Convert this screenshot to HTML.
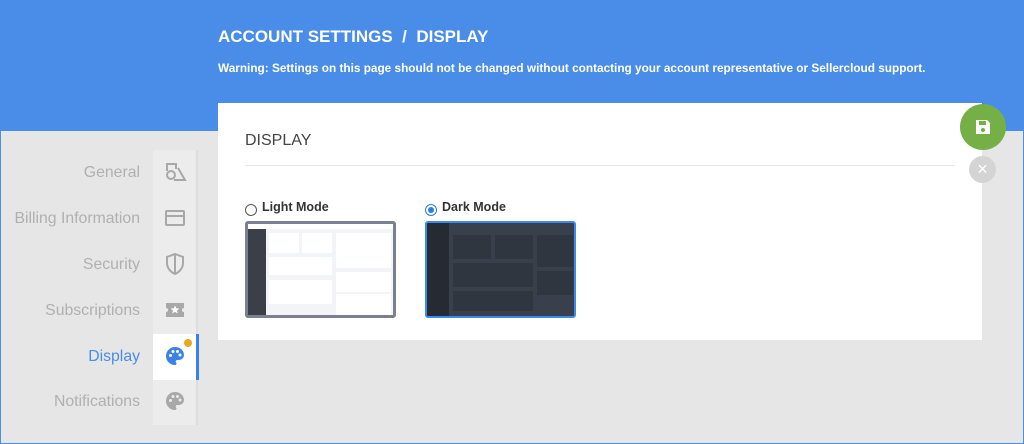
<!DOCTYPE html>
<html><head><style>
*{margin:0;padding:0;box-sizing:border-box}
body{width:1024px;height:444px;overflow:hidden;background:#e6e6e6;font-family:"Liberation Sans",sans-serif;position:relative}
.frame{position:absolute;left:0;top:0;width:1024px;height:444px;border:1px solid #4a8ee8;z-index:10;pointer-events:none}
.hdr{position:absolute;left:0;top:0;width:1024px;height:131px;background:#4a8de9}
.t{position:absolute;left:218px;top:27px;color:#fff;font-size:17px;font-weight:bold}
.w{position:absolute;left:218px;top:61px;color:#fff;font-size:11.8px;font-weight:bold}
.panel{position:absolute;left:218px;top:103px;width:764px;height:237px;background:#fff}
.ph{position:absolute;left:27px;top:29px;font-size:16px;color:#444}
.hr{position:absolute;left:27px;top:62px;width:710px;height:1px;background:#e6e6e6}
.lbl{position:absolute;font-size:12.5px;font-weight:bold;color:#333}
.rad{position:absolute;width:12px;height:12px;border-radius:50%;border:1px solid #555;background:#fff}
.thumb{position:absolute;width:151px;height:97px;border-radius:3px;overflow:hidden}
.side{position:absolute;left:153px;top:150px;width:45px;height:275px;background:#ececec;border-right:2px solid #ddd}
.item{position:absolute;right:884px;font-size:15.8px;color:#b0b0b0;text-align:right;white-space:nowrap}
.ic{position:absolute;left:163px;width:24px;height:24px}
.b{position:absolute}
</style></head><body>
<div class="hdr"></div>
<div class="t">ACCOUNT SETTINGS &nbsp;/&nbsp; DISPLAY</div>
<div class="w">Warning: Settings on this page should not be changed without contacting your account representative or Sellercloud support.</div>
<div class="panel">
<div class="ph">DISPLAY</div><div class="hr"></div>
<div class="rad" style="left:27px;top:101px"></div>
<div class="lbl" style="left:44px;top:97px">Light Mode</div>
<div class="rad" style="left:207px;top:101px;border-color:#2a7de1"><div style="position:absolute;left:2px;top:2px;width:6px;height:6px;border-radius:50%;background:#2a7de1"></div></div>
<div class="lbl" style="left:224px;top:97px">Dark Mode</div>
<div class="thumb" style="left:27px;top:118px;border:3px solid #7a8090;background:linear-gradient(90deg,#3a3f48 0 18px,#f2f4f7 18px)">
<div class="b" style="left:0;top:0;width:151px;height:5px;background:#fff"></div>
<div class="b" style="left:21px;top:9px;width:30px;height:20px;background:#fff"></div>
<div class="b" style="left:54px;top:9px;width:30px;height:20px;background:#fff"></div>
<div class="b" style="left:21px;top:33px;width:63px;height:18px;background:#fff"></div>
<div class="b" style="left:21px;top:56px;width:63px;height:24px;background:#fff"></div>
<div class="b" style="left:88px;top:9px;width:55px;height:35px;background:#fff"></div>
<div class="b" style="left:88px;top:48px;width:55px;height:20px;background:#fff"></div>
<div class="b" style="left:88px;top:70px;width:55px;height:22px;background:#fff"></div>
</div>
<div class="thumb" style="left:207px;top:118px;border:2px solid #3b8af0;background:linear-gradient(90deg,#262b33 0 22px,#39404b 22px)">
<div class="b" style="left:26px;top:12px;width:38px;height:24px;background:#2f3640"></div>
<div class="b" style="left:68px;top:12px;width:38px;height:24px;background:#2f3640"></div>
<div class="b" style="left:110px;top:12px;width:36px;height:32px;background:#2f3640"></div>
<div class="b" style="left:26px;top:40px;width:80px;height:24px;background:#2f3640"></div>
<div class="b" style="left:26px;top:68px;width:80px;height:20px;background:#2f3640"></div>
<div class="b" style="left:110px;top:48px;width:36px;height:24px;background:#2f3640"></div>
</div>
</div>
<div style="position:absolute;left:960px;top:104px;width:46px;height:46px;border-radius:50%;background:#74b045"></div>
<svg style="position:absolute;left:974px;top:118px" width="18" height="18" viewBox="0 0 18 18"><path d="M2 2h11l3 3v11H2z" fill="#fff"/><rect x="5" y="3" width="7" height="4" fill="#74b045"/><circle cx="9" cy="12" r="2" fill="#74b045"/></svg>
<div style="position:absolute;left:969px;top:156px;width:27px;height:27px;border-radius:50%;background:#d4d4d4;color:#fff;font-size:18px;text-align:center;line-height:27px">×</div>
<div class="side"></div>
<div style="position:absolute;left:153px;top:334px;width:45px;height:46px;background:#fff"></div>
<div style="position:absolute;left:196px;top:334px;width:3px;height:46px;background:#3b82e8"></div>
<div style="position:absolute;left:184px;top:339px;width:8px;height:8px;border-radius:50%;background:#e8a820"></div>
<div class="item" style="top:164px">General</div>
<div class="item" style="top:210px">Billing Information</div>
<div class="item" style="top:256px">Security</div>
<div class="item" style="top:302px">Subscriptions</div>
<div class="item" style="top:348px;color:#4a8de9">Display</div>
<div class="item" style="top:393px">Notifications</div>
<svg class="ic" style="top:160px" viewBox="0 0 24 24" fill="none" stroke="#a8a8a8" stroke-width="2"><path d="M4 11V4h9v5"/><circle cx="8" cy="15" r="4"/><path d="M15 8l7 12H11"/></svg>
<svg class="ic" style="top:206px" viewBox="0 0 24 24" fill="none" stroke="#a8a8a8" stroke-width="2"><rect x="3" y="5" width="18" height="14" rx="1"/><path d="M3 10h18"/></svg>
<svg class="ic" style="top:252px" viewBox="0 0 24 24" fill="none" stroke="#a8a8a8" stroke-width="2"><path d="M12 2l8 3v6c0 5-3.5 9-8 11-4.5-2-8-6-8-11V5z M12 2v20"/></svg>
<svg class="ic" style="top:298px" viewBox="0 0 24 24"><path d="M3 5h18v5a2 2 0 000 4v5H3v-5a2 2 0 000-4z" fill="#a8a8a8"/><path d="M12 7.5l1.3 2.7 3 .3-2.2 2 .6 3-2.7-1.6-2.7 1.6.6-3-2.2-2 3-.3z" fill="#fff"/></svg>
<svg class="ic" style="top:344px" viewBox="0 0 24 24"><path d="M12 3a9 9 0 000 18c1 0 1.5-.7 1.5-1.5 0-.4-.2-.8-.4-1-.3-.3-.4-.6-.4-1 0-.8.7-1.5 1.5-1.5H16a5 5 0 005-5c0-4.4-4-8-9-8z" fill="#3b82e8"/><circle cx="7.5" cy="11.5" r="1.5" fill="#fff"/><circle cx="10" cy="7.5" r="1.5" fill="#fff"/><circle cx="14.5" cy="7.5" r="1.5" fill="#fff"/><circle cx="17" cy="11" r="1.5" fill="#fff"/></svg>
<svg class="ic" style="top:389px" viewBox="0 0 24 24"><path d="M12 3a9 9 0 000 18c1 0 1.5-.7 1.5-1.5 0-.4-.2-.8-.4-1-.3-.3-.4-.6-.4-1 0-.8.7-1.5 1.5-1.5H16a5 5 0 005-5c0-4.4-4-8-9-8z" fill="#a8a8a8"/><circle cx="7.5" cy="11.5" r="1.5" fill="#ececec"/><circle cx="10" cy="7.5" r="1.5" fill="#ececec"/><circle cx="14.5" cy="7.5" r="1.5" fill="#ececec"/><circle cx="17" cy="11" r="1.5" fill="#ececec"/></svg>
<div class="frame"></div>
</body></html>
